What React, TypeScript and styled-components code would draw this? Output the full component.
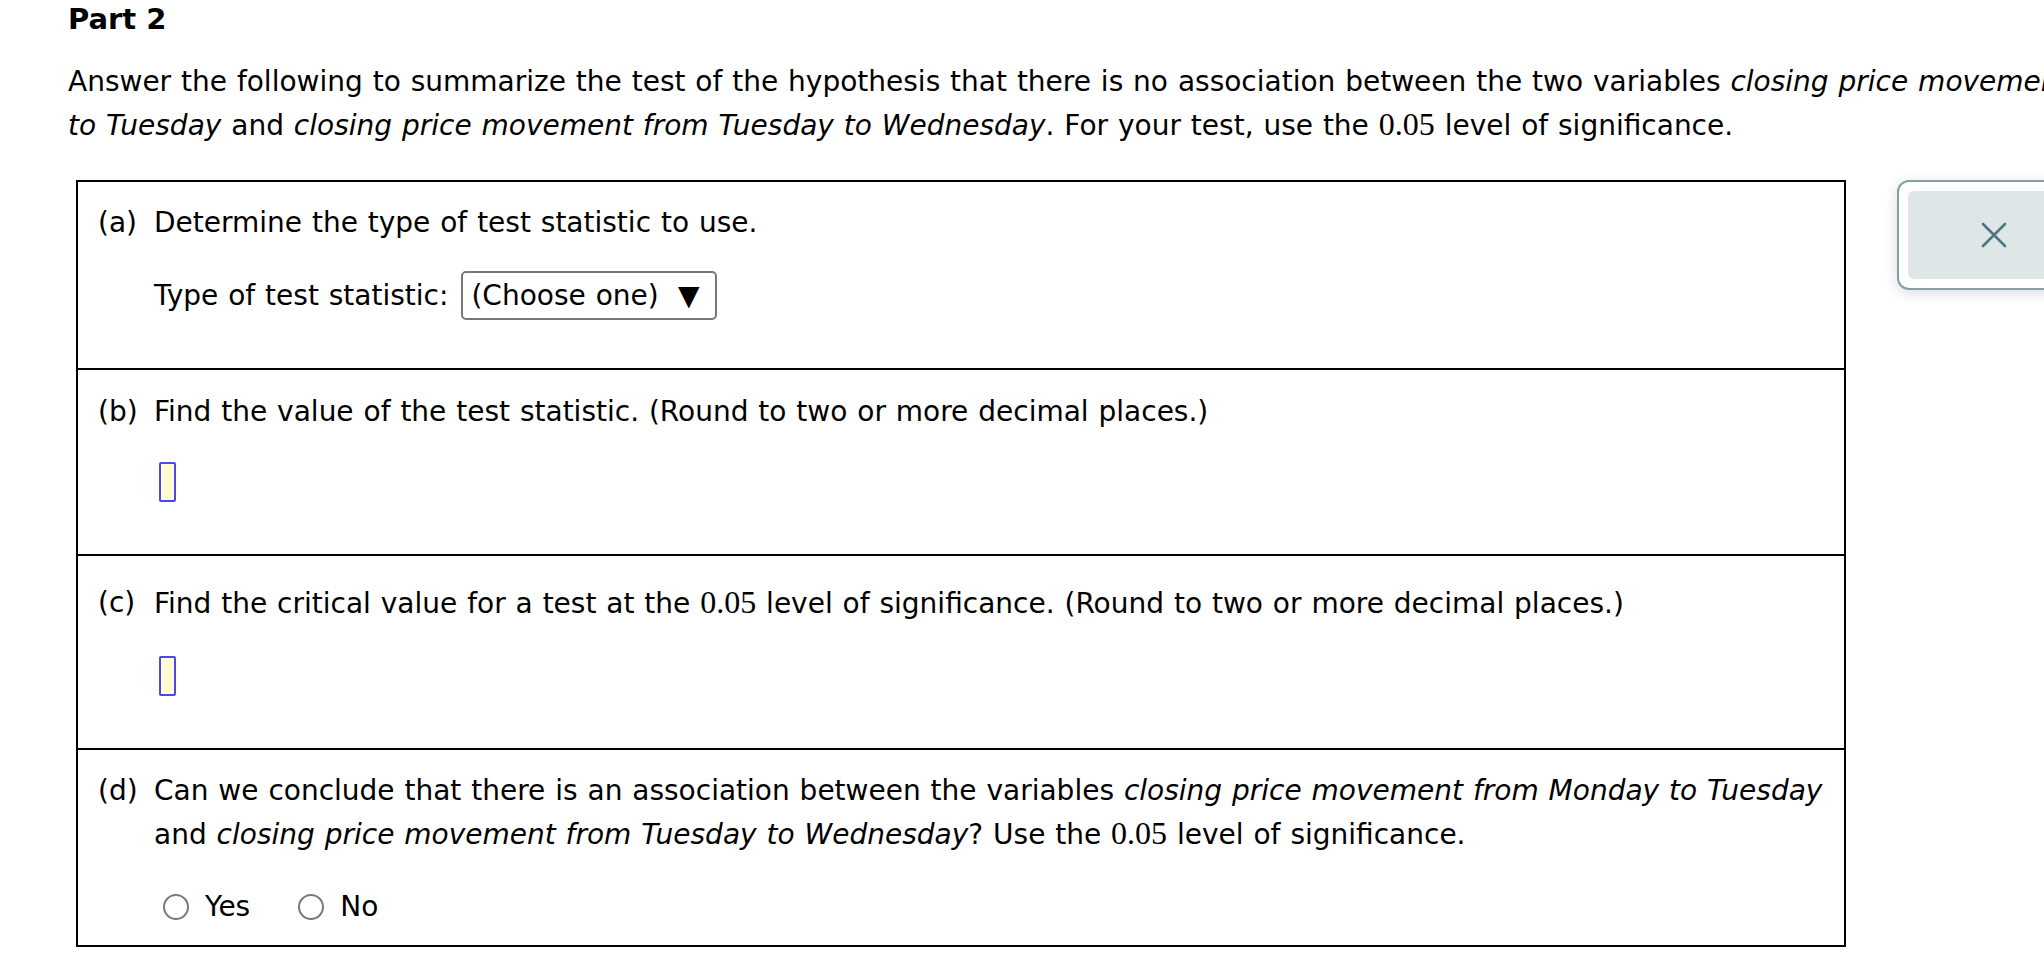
import React from "react";
import styled, { createGlobalStyle } from "styled-components";

const Global = createGlobalStyle`
  html, body { margin: 0; padding: 0; background: #fff; overflow: hidden; }
  body { font-family: "DejaVu Sans", Verdana, sans-serif; color: #000; }
`;

const Page = styled.div`
  width: 2044px;
  height: 953px;
  overflow: hidden;
  padding-left: 68px;
  box-sizing: border-box;
  font-size: 28px;
  word-spacing: 1px;
`;

const Title = styled.h2`
  margin: 0;
  font-size: 29px;
  font-weight: bold;
  line-height: 38px;
  word-spacing: 0;
`;

const Intro = styled.p`
  margin: 22px 0 0;
  line-height: 43px;
  white-space: nowrap;
`;

const Em = styled.i`
  font-style: italic;
`;

const Num = styled.span`
  font-family: "Liberation Serif", "Times New Roman", serif;
  font-size: 32px;
  word-spacing: 0;
`;

const Main = styled.div`
  display: flex;
  align-items: flex-start;
  gap: 51px;
  margin: 33px 0 0 8px;
`;

const Table = styled.div`
  flex-shrink: 0;
  width: 1770px;
  box-sizing: border-box;
  border: 2px solid #000;
  display: flex;
  flex-direction: column;
`;

const Row = styled.div<{ $h: number; $pt: number }>`
  height: ${(p) => p.$h}px;
  padding: ${(p) => p.$pt}px 20px 0;
  box-sizing: border-box;
  & + & {
    border-top: 2px solid #000;
  }
`;

const Question = styled.div`
  display: grid;
  grid-template-columns: 56px 1fr;
  line-height: 43px;
`;

const Answer = styled.div<{ $mt: number }>`
  margin: ${(p) => p.$mt}px 0 0 56px;
  display: flex;
  align-items: center;
  line-height: 43px;
`;

const Select = styled.div`
  margin-left: 13px;
  height: 49px;
  width: 256px;
  box-sizing: border-box;
  border: 2px solid #777;
  border-radius: 5px;
  display: flex;
  align-items: center;
  padding: 0 16px 0 8px;
  white-space: nowrap;
`;

const Arrow = styled.span`
  margin-left: auto;
  font-size: 28px;
  line-height: 1;
`;

const Blank = styled.span`
  display: block;
  margin-left: 5px;
  width: 17px;
  height: 40px;
  box-sizing: border-box;
  border: 2.5px solid #4848f0;
  background: #fffbd3;
  border-radius: 2px;
`;

const Option = styled.label<{ $ml: number }>`
  display: flex;
  align-items: center;
  margin-left: ${(p) => p.$ml}px;
`;

const Circle = styled.span`
  display: block;
  width: 26px;
  height: 26px;
  box-sizing: border-box;
  border: 2px solid #7a7a7a;
  border-radius: 50%;
  margin-right: 16px;
  background: #fff;
`;

const ClosePanel = styled.div`
  flex-shrink: 0;
  box-sizing: border-box;
  width: 194px;
  height: 110px;
  border: 2px solid #86a0a8;
  border-radius: 12px;
  background: #fff;
  padding: 9px;
  box-shadow: 0 3px 14px rgba(0, 0, 0, 0.14);
`;

const CloseBtn = styled.button`
  width: 172px;
  height: 100%;
  border: none;
  background: #dfe6e8;
  border-radius: 6px;
  display: flex;
  align-items: center;
  justify-content: center;
  padding: 0;
`;

export default function App() {
  return (
    <>
      <Global />
      <Page>
        <Title>Part 2</Title>
        <Intro>
          Answer the following to summarize the test of the hypothesis that there is no association between the two
          variables <Em>closing price movement from Monday</Em>
          <br />
          <Em>to Tuesday</Em> and <Em>closing price movement from Tuesday to Wednesday</Em>. For your test, use the{" "}
          <Num>0.05</Num> level of significance.
        </Intro>
        <Main>
          <Table>
            <Row $h={186} $pt={19}>
              <Question>
                <span>(a)</span>
                <span>Determine the type of test statistic to use.</span>
              </Question>
              <Answer $mt={27}>
                <span>Type of test statistic:</span>
                <Select>
                  <span>(Choose one)</span>
                  <Arrow>▼</Arrow>
                </Select>
              </Answer>
            </Row>
            <Row $h={186} $pt={20}>
              <Question>
                <span>(b)</span>
                <span>Find the value of the test statistic. (Round to two or more decimal places.)</span>
              </Question>
              <Answer $mt={29}>
                <Blank />
              </Answer>
            </Row>
            <Row $h={194} $pt={25}>
              <Question>
                <span>(c)</span>
                <span>
                  Find the critical value for a test at the <Num>0.05</Num> level of significance. (Round to two or
                  more decimal places.)
                </span>
              </Question>
              <Answer $mt={31}>
                <Blank />
              </Answer>
            </Row>
            <Row $h={197} $pt={19}>
              <Question>
                <span>(d)</span>
                <span>
                  Can we conclude that there is an association between the variables{" "}
                  <Em>closing price movement from Monday to Tuesday</Em>
                  <br />
                  and <Em>closing price movement from Tuesday to Wednesday</Em>? Use the <Num>0.05</Num> level of
                  significance.
                </span>
              </Question>
              <Answer $mt={29}>
                <Option $ml={9}>
                  <Circle />
                  Yes
                </Option>
                <Option $ml={48}>
                  <Circle />
                  No
                </Option>
              </Answer>
            </Row>
          </Table>
          <ClosePanel>
            <CloseBtn aria-label="Close">
              <svg width="26" height="26" viewBox="0 0 26 26">
                <path d="M2 2 L24 24 M24 2 L2 24" stroke="#4f7580" strokeWidth="2.6" strokeLinecap="round" fill="none" />
              </svg>
            </CloseBtn>
          </ClosePanel>
        </Main>
      </Page>
    </>
  );
}
